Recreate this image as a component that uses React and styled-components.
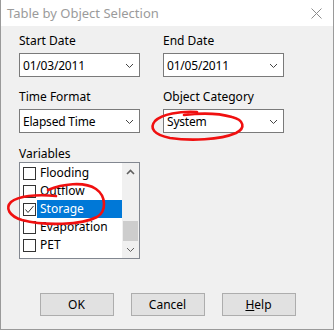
import React from "react";
import styled, { createGlobalStyle } from "styled-components";

const GlobalStyle = createGlobalStyle`
  html, body {
    margin: 0;
    padding: 0;
    background: #ffffff;
  }
  body {
    font-family: "Noto Sans", "Open Sans", sans-serif;
    font-size: 12px;
    color: #000;
  }
`;

const variables = [
  { name: "Flooding", checked: false },
  { name: "Outflow", checked: false },
  { name: "Storage", checked: true, selected: true },
  { name: "Evaporation", checked: false },
  { name: "PET", checked: false },
];

// chevron used by combos and scrollbar
const Chevron = ({ up, color = "#444" }) => (
  <svg width="9" height="6" viewBox="0 0 9 6">
    <polyline
      points={up ? "1,5 4.5,1.5 8,5" : "1,1 4.5,4.5 8,1"}
      fill="none"
      stroke={color}
      strokeWidth={up ? "1.6" : "1"}
    />
  </svg>
);

const Combo = ({ value }) => (
  <ComboBox>
    <span>{value}</span>
    <Chevron />
  </ComboBox>
);

const App = () => {
  return (
    <>
      <GlobalStyle />
      <Stage>
        <Window>
          <TitleBar>
            <span>Table by Object Selection</span>
            <svg width="11" height="11" viewBox="0 0 11 11">
              <path d="M0.5 0.5 L10.5 10.5 M10.5 0.5 L0.5 10.5" stroke="#8c8c8c" strokeWidth="1" />
            </svg>
          </TitleBar>
          <Body>
            <FormGrid>
              <Field>
                <Label>Start Date</Label>
                <Combo value="01/03/2011" />
              </Field>
              <Field>
                <Label>End Date</Label>
                <Combo value="01/05/2011" />
              </Field>
              <Field $top={12}>
                <Label>Time Format</Label>
                <Combo value="Elapsed Time" />
              </Field>
              <Field $top={12}>
                <Label>Object Category</Label>
                <Combo value="System" />
              </Field>
              <Field $top={13} $gap={0}>
                <Label>Variables</Label>
                <ListBox>
                  <Items>
                    {variables.map((v) => (
                      <Row key={v.name}>
                        <Check>
                          {v.checked && (
                            <svg width="11" height="11" viewBox="0 0 11 11">
                              <polyline points="1.5,5.5 4,8.5 9.5,2" fill="none" stroke="#333" strokeWidth="1" />
                            </svg>
                          )}
                        </Check>
                        <ItemText $selected={v.selected}>{v.name}</ItemText>
                      </Row>
                    ))}
                  </Items>
                  <ScrollBar>
                    <ArrowBtn>
                      <Chevron up color="#606060" />
                    </ArrowBtn>
                    <Track>
                      <Thumb />
                    </Track>
                    <ArrowBtn>
                      <Chevron color="#606060" />
                    </ArrowBtn>
                  </ScrollBar>
                </ListBox>
              </Field>
            </FormGrid>
            <Buttons>
              <Button>OK</Button>
              <Button>Cancel</Button>
              <Button>
                <u>H</u>elp
              </Button>
            </Buttons>
          </Body>
          <Scribbles width="334" height="330" viewBox="0 0 334 330">
            <path
              d="M197 112 C180 111 162 114 155 121 C149 128 154 135 170 138 C190 141 220 140 236 133 C246 128 244 120 232 117 C218 113 200 113 184 115"
              fill="none"
              stroke="#f01010"
              strokeWidth="2.6"
              strokeLinecap="round"
            />
            <path
              d="M48 190 C62 184 84 181 96 189 C106 196 107 211 97 217 C82 225 45 226 22 220 C9 216 5 208 11 202 C18 196 36 194 56 196"
              fill="none"
              stroke="#f01010"
              strokeWidth="2.6"
              strokeLinecap="round"
            />
          </Scribbles>
        </Window>
      </Stage>
    </>
  );
};

const Stage = styled.div`
  width: 335px;
  height: 333px;
  background: #ffffff;
`;

const Window = styled.div`
  position: relative;
  width: 334px;
  height: 330px;
  box-sizing: border-box;
  border: 1px solid #9a9a9a;
  border-top: none;
  background: #f0f0f0;
  display: flex;
  flex-direction: column;
`;

const TitleBar = styled.div`
  height: 26px;
  background: #ffffff;
  display: flex;
  align-items: center;
  justify-content: space-between;
  padding: 0 11px 0 6px;
  font-size: 13px;
  color: #9b9b9b;
`;

const Body = styled.div`
  flex: 1;
  padding: 7px 0 0 18px;
  display: flex;
  flex-direction: column;
`;

const FormGrid = styled.div`
  display: grid;
  grid-template-columns: 121px 121px;
  column-gap: 23px;
  align-items: start;
`;

const Field = styled.div`
  display: flex;
  flex-direction: column;
  gap: ${({ $gap }) => ($gap === undefined ? 4 : $gap)}px;
  margin-top: ${({ $top }) => $top || 0}px;
`;

const Label = styled.div`
  height: 16px;
  line-height: 16px;
  font-size: 12px;
  white-space: nowrap;
`;

const ComboBox = styled.div`
  box-sizing: border-box;
  height: 24px;
  border: 1px solid #7a7a7a;
  background: #ffffff;
  display: flex;
  align-items: center;
  justify-content: space-between;
  padding: 0 5px 0 3px;
  font-size: 12px;
  letter-spacing: -0.2px;
  svg {
    margin-top: 1px;
  }
`;

const ListBox = styled.div`
  box-sizing: border-box;
  height: 97px;
  border: 1px solid #828790;
  background: #ffffff;
  display: flex;
`;

const Items = styled.div`
  flex: 1;
  padding-top: 1px;
  display: flex;
  flex-direction: column;
`;

const Row = styled.div`
  height: 18px;
  display: flex;
  align-items: center;
  padding-left: 3px;
`;

const Check = styled.span`
  box-sizing: border-box;
  width: 13px;
  height: 13px;
  border: 1px solid #333333;
  background: #ffffff;
  display: flex;
  align-items: center;
  justify-content: center;
  flex: none;
`;

const ItemText = styled.span`
  flex: 1;
  height: 18px;
  line-height: 18px;
  margin-left: 1px;
  padding-left: 3px;
  font-size: 12px;
  background: ${({ $selected }) => ($selected ? "#0078d7" : "transparent")};
  color: ${({ $selected }) => ($selected ? "#ffffff" : "#000000")};
`;

const ScrollBar = styled.div`
  width: 17px;
  background: #f0f0f0;
  display: flex;
  flex-direction: column;
`;

const ArrowBtn = styled.div`
  height: 17px;
  display: flex;
  align-items: center;
  justify-content: center;
`;

const Track = styled.div`
  flex: 1;
  display: flex;
  flex-direction: column;
  justify-content: flex-end;
  align-items: center;
`;

const Thumb = styled.div`
  width: 15px;
  height: 20px;
  background: #cdcdcd;
`;

const Buttons = styled.div`
  display: flex;
  justify-content: center;
  gap: 17px;
  margin-top: 34px;
  margin-left: -17px;
`;

const Button = styled.div`
  box-sizing: border-box;
  width: 74px;
  height: 23px;
  border: 1px solid #adadad;
  background: #e1e1e1;
  display: flex;
  align-items: center;
  justify-content: center;
  font-size: 12px;
`;

const Scribbles = styled.svg`
  position: absolute;
  left: -1px;
  top: 0;
  pointer-events: none;
`;

export default App;
